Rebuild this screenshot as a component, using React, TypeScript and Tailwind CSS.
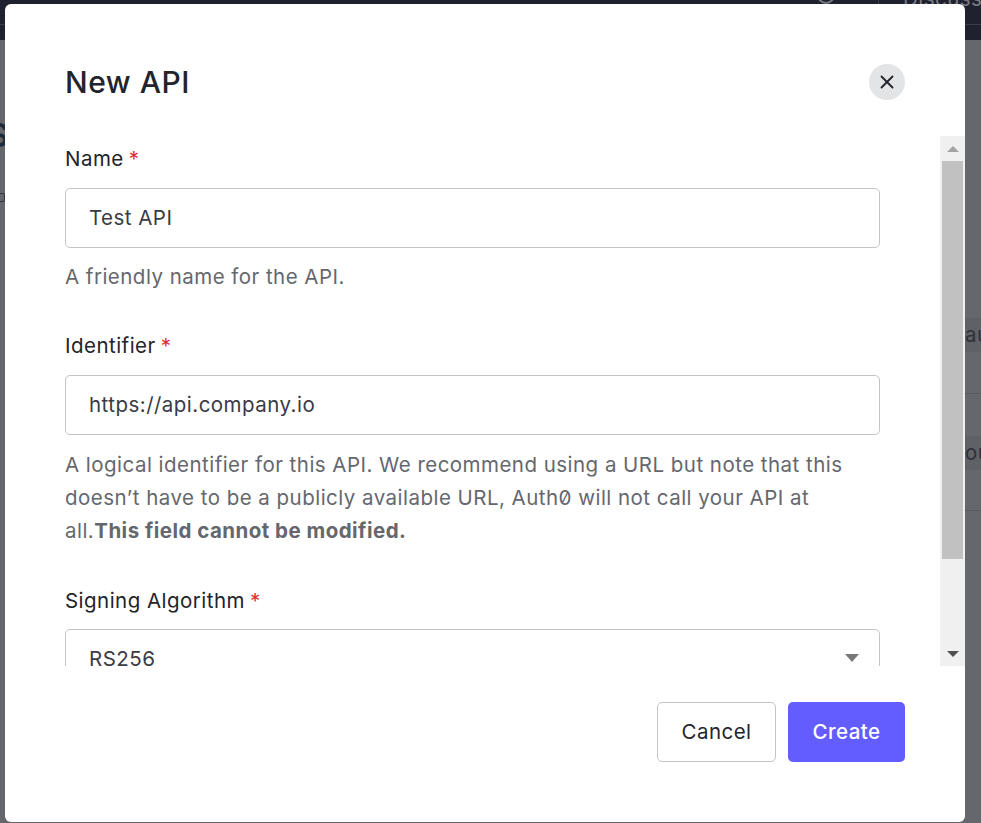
import { X } from "lucide-react"

function Label({ text }: { text: string }) {
  return (
    <label className="block text-[20.5px] leading-[28px] text-[#23242b]">
      {text}
      <span className="ml-[5px] text-[#d93030]">*</span>
    </label>
  )
}

function Input({ value, top = "mt-[15px]" }: { value: string; top?: string }) {
  return (
    <div className={`${top} flex h-[60px] w-[815px] items-center rounded-[5px] border border-[#c4c4c8] bg-white px-[23px] text-[20.5px] text-[#3a3b44]`}>
      {value}
    </div>
  )
}

export default function App() {
  return (
    <div className="relative h-[823px] w-[981px] overflow-hidden bg-[#66676c] font-['Inter',sans-serif] tracking-[0.47px]">
      {/* page behind the dialog */}
      <div className="relative h-[40px] bg-[#1f222e]">
        <div className="absolute left-0 right-0 top-[24px] h-px bg-[#3a3c47]" />
        <div className="absolute left-[878px] top-0 h-[24px] w-px bg-[#3a3c47]" />
        <div className="absolute left-[817px] -top-[14px] h-[18px] w-[18px] rounded-full border-2 border-[#7a7b84]" />
        <div className="absolute left-[903px] -top-[15px] whitespace-nowrap text-[20.5px] leading-[28px] text-[#7a7b84]">Discuss</div>
      </div>
      <div className="absolute left-[965px] top-[318px] h-[34px] w-[16px] overflow-hidden bg-[#606166] pt-[3px] text-[20.5px] leading-[28px] text-[#2f3038]">au</div>
      <div className="absolute left-[965px] top-[393px] h-px w-[16px] bg-[#5a5b60]" />
      <div className="absolute left-[965px] top-[436px] h-[34px] w-[16px] overflow-hidden bg-[#606166] pt-[3px] text-[20.5px] leading-[28px] text-[#2f3038]">ou</div>
      <div className="absolute left-[965px] top-[510px] h-px w-[16px] bg-[#5a5b60]" />
      <div className="absolute -left-[12px] top-[116px] text-[32px] leading-[40px] font-semibold text-[#1f2a3a]">S</div>
      <div className="absolute -left-[6px] top-[193px] h-[9px] w-[11px] rounded-[2px] border border-[#33343a]" />

      {/* dialog */}
      <div className="absolute left-[5px] top-[4px] flex h-[818px] w-[960px] flex-col rounded-[6px] bg-white">
        <div className="flex h-[132px] items-start justify-between pl-[60px] pr-[60px] pt-[60px]">
          <h1 className="text-[30px] leading-[36px] font-medium tracking-[0.5px] text-[#23242b]">New API</h1>
          <button className="flex h-[36px] w-[36px] items-center justify-center rounded-full bg-[#e3e4e6] text-[#23242b]">
            <X size={22} strokeWidth={2} />
          </button>
        </div>

        <div className="flex h-[530px] overflow-hidden">
          <div className="flex-1 overflow-hidden pl-[60px] pt-[9px]">
            <Label text="Name" />
            <Input value="Test API" />
            <p className="mt-[12px] text-[20.5px] leading-[33px] text-[#65676e]">A friendly name for the API.</p>

            <div className="mt-[39px]">
              <Label text="Identifier" />
            </div>
            <Input value="https://api.company.io" />
            <p className="mt-[13px] w-[815px] text-[20.5px] leading-[33px] text-[#65676e]">
              A logical identifier for this API. We recommend using a URL but note that this doesn’t have to be a publicly available URL, Auth<span className="slashed-zero">0</span> will not call your API at all.
              <strong className="font-bold">This field cannot be modified.</strong>
            </p>

            <div className="mt-[40px]">
              <Label text="Signing Algorithm" />
            </div>
            <div className="relative">
              <Input value="RS256" top="mt-[14px]" />
              <span className="absolute left-[780px] top-[25px] h-0 w-0 border-x-[7.5px] border-t-[8px] border-x-transparent border-t-[#777]" />
            </div>
          </div>

          {/* scrollbar */}
          <div className="flex w-[25px] flex-col items-center bg-[#f0f0f0]">
            <div className="flex h-[25px] items-center justify-center">
              <span className="h-0 w-0 border-x-[6px] border-b-[6px] border-x-transparent border-b-[#a3a3a3]" />
            </div>
            <div className="h-[398px] w-[21px] bg-[#c1c1c1]" />
            <div className="flex flex-1 items-end justify-center pb-[9px]">
              <span className="h-0 w-0 border-x-[6px] border-t-[6px] border-x-transparent border-t-[#505050]" />
            </div>
          </div>
        </div>

        <div className="flex justify-end gap-[12px] pr-[60px] pt-[36px]">
          <button className="h-[60px] w-[119px] rounded-[5px] border border-[#c4c4c8] bg-white text-[20.5px] text-[#23242b]">Cancel</button>
          <button className="h-[60px] w-[117px] rounded-[5px] bg-[#635dff] text-[20.5px] font-medium text-white">Create</button>
        </div>
      </div>
    </div>
  )
}
